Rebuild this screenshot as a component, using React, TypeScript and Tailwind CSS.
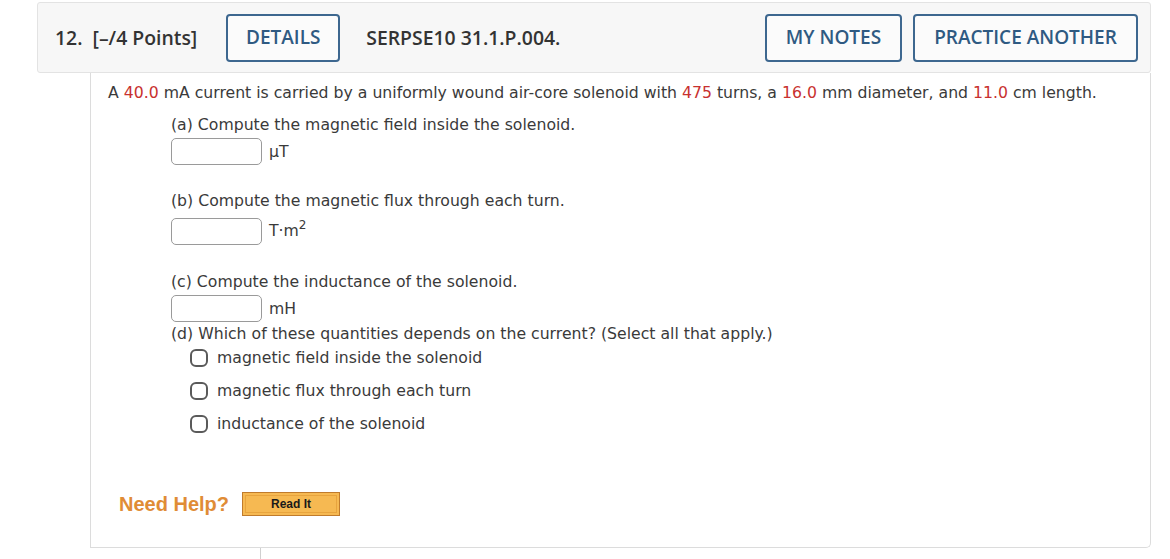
import React from 'react';

const Red = ({ children }: { children: React.ReactNode }) => (
  <span className="text-[#c8312f]">{children}</span>
);

const Answer = ({ unit, className = '' }: { unit: React.ReactNode; className?: string }) => (
  <div className={`flex items-center gap-[7px] ${className}`}>
    <div className="w-[91px] h-[27px] rounded-[5px] border border-[#9a9a9a] bg-white" />
    <span className="leading-[22px]">{unit}</span>
  </div>
);

const Check = ({ label, className = '' }: { label: string; className?: string }) => (
  <div className={`flex items-center h-[22px] pl-[19px] ${className}`}>
    <span className="w-[18px] h-[18px] rounded-[6px] border-2 border-[#5a5a5a] bg-white" />
    <span className="ml-[9px]">{label}</span>
  </div>
);

const HeaderButton = ({ children, className = '' }: { children: React.ReactNode; className?: string }) => (
  <button
    className={`h-[48px] rounded-[4px] border-2 border-[#3d678f] bg-[#fbfbfb] text-[#2f5a82] text-[19px] font-semibold ${className}`}
  >
    {children}
  </button>
);

export default function App() {
  return (
    <div className="w-[1170px] h-[559px] bg-white overflow-hidden font-['Open_Sans',sans-serif]">
      {/* question header */}
      <div className="ml-[37px] mt-[2px] w-[1114px] h-[71px] rounded-[3px] border border-[#e3e3e3] bg-[#f7f7f7] flex items-center pl-[17px] pr-[12px] text-[19.4px] text-[#333]">
        <span className="font-semibold">12.</span>
        <span className="font-semibold ml-[10px]">[–/4 Points]</span>
        <HeaderButton className="ml-[29px] w-[114px]">DETAILS</HeaderButton>
        <span className="font-semibold ml-[26px]">SERPSE10 31.1.P.004.</span>
        <div className="ml-auto flex gap-[11px]">
          <HeaderButton className="w-[137px]">MY NOTES</HeaderButton>
          <HeaderButton className="w-[225px]">PRACTICE ANOTHER</HeaderButton>
        </div>
      </div>

      {/* question body */}
      <div className="ml-[90px] w-[1061px] h-[475px] border-l border-r border-b border-[#dcdcdc] rounded-br-[5px] font-['DejaVu_Sans','Verdana',sans-serif] text-[15.7px] text-[#3a3a3a] leading-[22px] pt-[9px] pl-[17px] flex flex-col">
        <p>
          A <Red>40.0</Red> mA current is carried by a uniformly wound air-core solenoid with <Red>475</Red> turns, a{' '}
          <Red>16.0</Red> mm diameter, and <Red>11.0</Red> cm length.
        </p>

        <div className="ml-[63px] flex flex-col">
          <p className="mt-[10px]">(a) Compute the magnetic field inside the solenoid.</p>
          <Answer className="mt-[2px]" unit="μT" />

          <p className="mt-[25px]">(b) Compute the magnetic flux through each turn.</p>
          <Answer
            className="mt-[6px]"
            unit={
              <>
                T·m<span className="text-[12px] relative -top-[7px]">2</span>
              </>
            }
          />

          <p className="mt-[26px]">(c) Compute the inductance of the solenoid.</p>
          <Answer className="mt-[2px]" unit="mH" />

          <p className="mt-[1px]">(d) Which of these quantities depends on the current? (Select all that apply.)</p>
          <Check className="mt-[2px]" label="magnetic field inside the solenoid" />
          <Check className="mt-[11px]" label="magnetic flux through each turn" />
          <Check className="mt-[11px]" label="inductance of the solenoid" />
        </div>

        <div className="mt-[57px] ml-[11px] flex items-center gap-[13px] font-['Liberation_Sans',Arial,sans-serif]">
          <span className="text-[20px] font-bold text-[#e08c36]">Need Help?</span>
          <button className="w-[98px] h-[24px] border border-[#c07b2c] bg-[#f6b952] p-[2px]">
            <span className="flex h-full w-full items-center justify-center border border-[#e8a43e] text-[12px] font-bold text-[#1a1a1a]">
              Read It
            </span>
          </button>
        </div>
      </div>

      {/* next block edge */}
      <div className="ml-[260px] h-[12px] border-l border-[#d0d0d0]" />
    </div>
  );
}
